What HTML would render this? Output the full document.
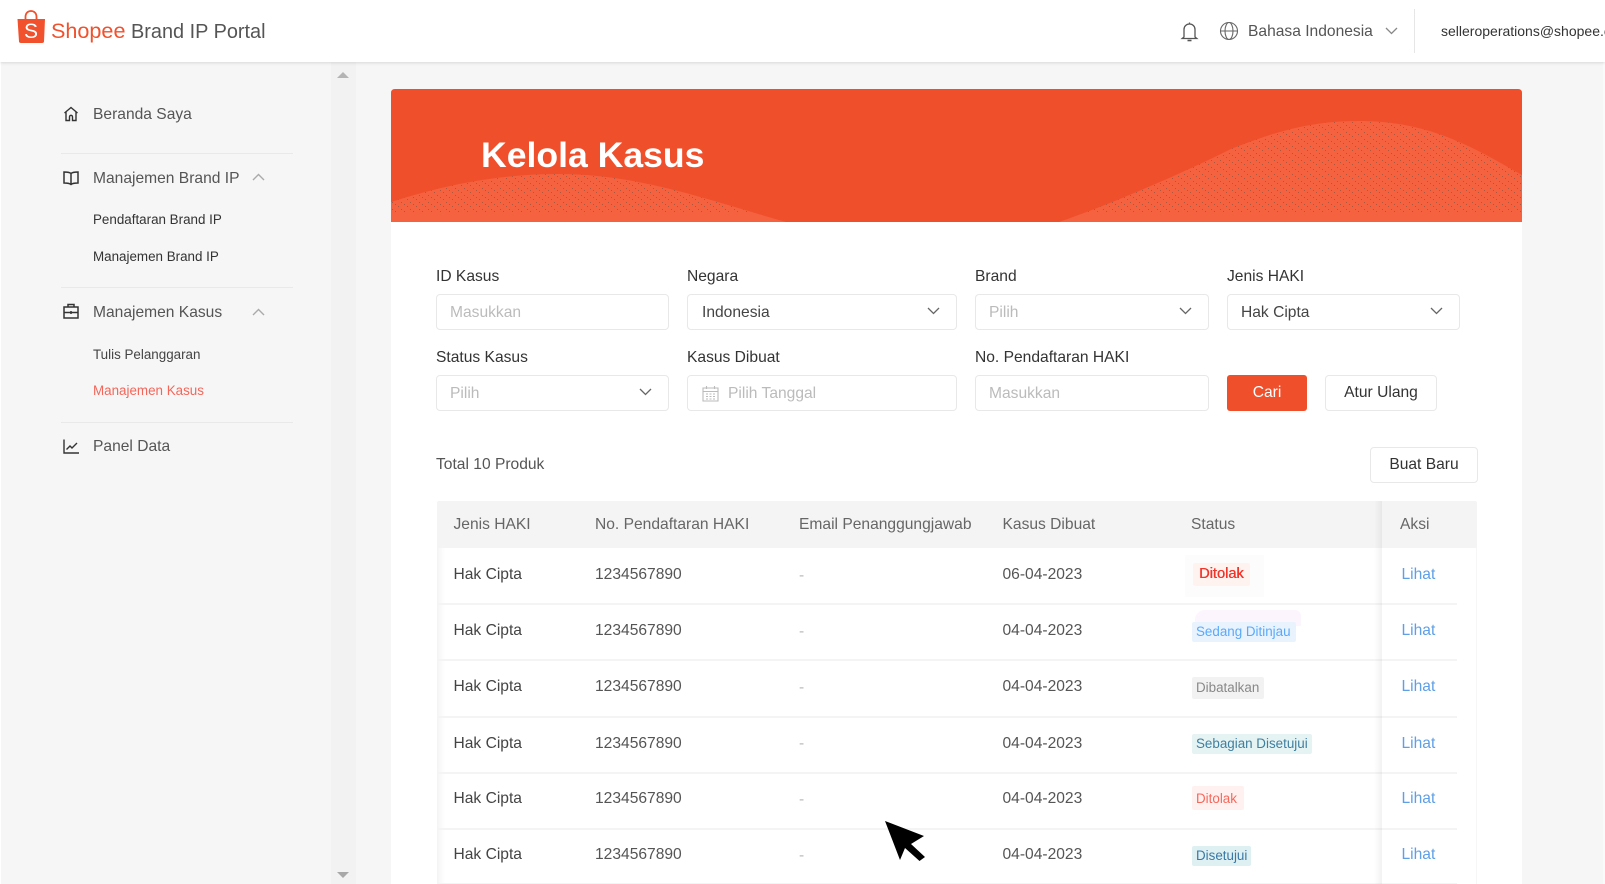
<!DOCTYPE html>
<html lang="id">
<head>
<meta charset="utf-8">
<title>Kelola Kasus</title>
<style>
html,body{margin:0;padding:0;width:1605px;height:884px;overflow:hidden;background:#f6f6f6}
body{position:relative;font-family:"Liberation Sans",Arial,sans-serif;font-size:15.6px;color:#444}
.a{position:absolute}
.t{position:absolute;white-space:nowrap;line-height:20px;height:20px}
.box{position:absolute;box-sizing:border-box;background:#fff;border:1px solid #e8e8e8;border-radius:4px;height:36px}
.lab{color:#333}
.ph{color:#bbb}
.sub{font-size:13.4px;color:#333}
.menu{color:#555}
.hd{color:#666}
.d{color:#555}
.l{color:#5f9fe6}
.hr{position:absolute;height:1px;background:#e9e9e9;left:61px;width:232px}
.row{position:absolute;left:437px;width:1020px;height:2px;background:#f4f4f4}
.tag{position:absolute;font-size:13.4px;line-height:20px;white-space:nowrap;box-sizing:border-box;border-radius:2px}
svg{position:absolute;overflow:visible}
</style>
</head>
<body>
<!-- page strips -->
<div class="a" style="left:0;top:62px;width:1px;height:822px;background:#fff"></div>
<div class="a" style="left:1603px;top:62px;width:2px;height:822px;background:#fafafa"></div>

<!-- scrollbar track -->
<div class="a" style="left:331px;top:62px;width:25px;height:822px;background:#f2f2f2"></div>
<svg style="left:337px;top:71px" width="12" height="8"><path d="M6 1L12 7H0Z" fill="#b4b4b4"/></svg>
<svg style="left:337px;top:871px" width="12" height="8"><path d="M0 1H12L6 7Z" fill="#a8a8a8"/></svg>

<!-- header -->
<div class="a" style="left:0;top:0;width:1605px;height:62px;background:#fff;box-shadow:0 1px 3px rgba(0,0,0,.12)"></div>
<svg style="left:17px;top:10px" width="29" height="34" viewBox="0 0 29 34">
  <path d="M8.500 9V7C8.500 3 11 1 14 1s5.500 2 5.500 6v2" fill="none" stroke="#f1512c" stroke-width="1.800"/>
  <path d="M0.500 9H28L27 31.500C27 32.500 26 33 25 33H4C3 33 2 32.500 2 31.500Z" fill="#f1512c"/>
  <text x="14" y="28" text-anchor="middle" font-family="Liberation Sans" font-size="21" fill="#fff">S</text>
</svg>
<div class="t" style="left:51px;top:19px;font-size:21.6px;line-height:24px;height:24px;color:#f1512c">Shopee</div>
<div class="t" style="left:131px;top:20px;font-size:19.9px;line-height:24px;height:24px;color:#555">Brand IP Portal</div>

<svg style="left:1181px;top:21px" width="17" height="21" viewBox="0 0 17 21" fill="none" stroke="#555" stroke-width="1.300">
  <path d="M8.500 1.500V3M3 16V8.500C3 5.300 5.300 3 8.500 3s5.500 2.300 5.500 5.500V16l1.800 1.500H1.200Z"/>
  <path d="M6.500 19.500h4" stroke-width="1.600"/>
</svg>
<svg style="left:1219px;top:21px" width="20" height="20" viewBox="0 0 20 20" fill="none" stroke="#666" stroke-width="1.100">
  <circle cx="10" cy="10" r="8.500"/>
  <ellipse cx="10" cy="10" rx="4" ry="8.500"/>
  <path d="M1.500 10h17"/>
</svg>
<div class="t" style="left:1248px;top:22px;color:#555">Bahasa Indonesia</div>
<svg style="left:1385px;top:27px" width="13" height="8" fill="none" stroke="#888" stroke-width="1.300"><path d="M1 1l5.500 5.500L12 1"/></svg>
<div class="a" style="left:1414px;top:9px;width:1px;height:44px;background:#e6e6e6"></div>
<div class="t" style="left:1441px;top:21px;font-size:14px;color:#333">selleroperations@shopee.com</div>

<!-- sidebar -->
<svg style="left:63px;top:106px" width="16" height="16" viewBox="0 0 16 16" fill="none" stroke="#333" stroke-width="1.400">
  <path d="M1.500 7L8 1.500 14.500 7M3 6v8.500h3.500V11c0-1 .7-1.700 1.500-1.700S9.500 10 9.500 11v3.500H13V6"/>
</svg>
<div class="t menu" style="left:93px;top:105px">Beranda Saya</div>
<div class="hr" style="top:153px"></div>

<svg style="left:63px;top:170px" width="16" height="16" viewBox="0 0 16 16" fill="none" stroke="#333" stroke-width="1.500">
  <path d="M8 3.500C7 2.500 5 2 1 2v11c4 0 6 .5 7 1.500 1-1 3-1.500 7-1.500V2c-4 0-6 .5-7 1.500ZM8 3.500v11"/>
</svg>
<div class="t menu" style="left:93px;top:168.500px">Manajemen Brand IP</div>
<svg style="left:252px;top:173px" width="13" height="8" fill="none" stroke="#aaa" stroke-width="1.400"><path d="M1 7l5.500-5.500L12 7"/></svg>
<div class="t sub" style="left:93px;top:210px">Pendaftaran Brand IP</div>
<div class="t sub" style="left:93px;top:246.500px">Manajemen Brand IP</div>
<div class="hr" style="top:287px"></div>

<svg style="left:63px;top:303px" width="16" height="16" viewBox="0 0 16 16" fill="none" stroke="#333" stroke-width="1.500">
  <path d="M1 4h14v11H1ZM5 4V1.500h6V4M1 9.500h14M8 8v3"/>
</svg>
<div class="t menu" style="left:93px;top:302.500px">Manajemen Kasus</div>
<svg style="left:252px;top:308px" width="13" height="8" fill="none" stroke="#aaa" stroke-width="1.400"><path d="M1 7l5.500-5.500L12 7"/></svg>
<div class="t sub" style="left:93px;top:344.500px;color:#444">Tulis Pelanggaran</div>
<div class="t sub" style="left:93px;top:380.500px;color:#f4665a">Manajemen Kasus</div>
<div class="hr" style="top:422px"></div>

<svg style="left:63px;top:438px" width="16" height="16" viewBox="0 0 16 16" fill="none" stroke="#333" stroke-width="1.400">
  <path d="M1 1.500V15h15"/>
  <path d="M3.500 11.500L7 8l2 2 5-5"/>
</svg>
<div class="t menu" style="left:93px;top:436.500px">Panel Data</div>

<!-- card -->
<div class="a" style="left:391px;top:222px;width:1131px;height:662px;background:#fff"></div>

<!-- banner -->
<svg style="left:391px;top:89px" width="1131" height="133" viewBox="0 0 1131 133">
  <defs>
    <clipPath id="bc"><path d="M0 133V4Q0 0 4 0H1127Q1131 0 1131 4V133Z"/></clipPath>
    <pattern id="dots" width="9" height="7" patternUnits="userSpaceOnUse">
      <rect x="1" y="1" width="1" height="1" fill="#7a4a3a" opacity=".55"/>
      <rect x="4" y="3" width="1" height="1" fill="#7a4a3a" opacity=".55"/>
      <rect x="7" y="5" width="1" height="1" fill="#7a4a3a" opacity=".55"/>
    </pattern>
    <clipPath id="dc"><rect x="0" y="0" width="1131" height="123"/></clipPath>
  </defs>
  <g clip-path="url(#bc)">
    <rect width="1131" height="133" fill="#f04f2b"/>
    <path d="M0 113C50 97 105 85 167 85C250 85 320 112 395 133H0Z" fill="#f4623f"/>
    <path d="M668 133C720 115 790 85 840 60C890 40 925 32 968 32C1040 32 1085 60 1131 86V133Z" fill="#f4623f"/>
    <g clip-path="url(#dc)">
      <path d="M0 113C50 97 105 85 167 85C250 85 320 112 395 133H0Z" fill="url(#dots)"/>
      <path d="M668 133C720 115 790 85 840 60C890 40 925 32 968 32C1040 32 1085 60 1131 86V133Z" fill="url(#dots)"/>
    </g>
  </g>
</svg>
<div class="t" style="left:481px;top:135px;font-size:35.6px;font-weight:bold;line-height:40px;height:40px;color:#fff">Kelola Kasus</div>

<!-- form row 1 -->
<div class="t lab" style="left:436px;top:267px">ID Kasus</div>
<div class="box" style="left:436px;top:294px;width:233px"></div>
<div class="t ph" style="left:450px;top:303px">Masukkan</div>

<div class="t lab" style="left:687px;top:267px">Negara</div>
<div class="box" style="left:687px;top:294px;width:270px"></div>
<div class="t" style="left:702px;top:303px">Indonesia</div>
<svg style="left:927px;top:307px" width="13" height="8" fill="none" stroke="#666" stroke-width="1.300"><path d="M1 1l5.500 5.500L12 1"/></svg>

<div class="t lab" style="left:975px;top:267px">Brand</div>
<div class="box" style="left:975px;top:294px;width:234px"></div>
<div class="t ph" style="left:989px;top:303px">Pilih</div>
<svg style="left:1179px;top:307px" width="13" height="8" fill="none" stroke="#666" stroke-width="1.300"><path d="M1 1l5.500 5.500L12 1"/></svg>

<div class="t lab" style="left:1227px;top:267px">Jenis HAKI</div>
<div class="box" style="left:1227px;top:294px;width:233px"></div>
<div class="t" style="left:1241px;top:303px">Hak Cipta</div>
<svg style="left:1430px;top:307px" width="13" height="8" fill="none" stroke="#666" stroke-width="1.300"><path d="M1 1l5.500 5.500L12 1"/></svg>

<!-- form row 2 -->
<div class="t lab" style="left:436px;top:347.500px">Status Kasus</div>
<div class="box" style="left:436px;top:375px;width:233px"></div>
<div class="t ph" style="left:450px;top:383.500px">Pilih</div>
<svg style="left:639px;top:388px" width="13" height="8" fill="none" stroke="#666" stroke-width="1.300"><path d="M1 1l5.500 5.500L12 1"/></svg>

<div class="t lab" style="left:687px;top:347.500px">Kasus Dibuat</div>
<div class="box" style="left:687px;top:375px;width:270px"></div>
<svg style="left:702px;top:385px" width="17" height="17" viewBox="0 0 17 17" fill="none" stroke="#bbb" stroke-width="1.100">
  <path d="M1 3h15v13H1ZM1 6.500h15M4.500 1v3M12.500 1v3"/>
  <path d="M4 9h2M7.500 9h2M11 9h2M4 11.500h2M7.500 11.500h2M11 11.500h2M4 14h2M7.500 14h2M11 14h2" stroke-width="1"/>
</svg>
<div class="t ph" style="left:728px;top:383.500px">Pilih Tanggal</div>

<div class="t lab" style="left:975px;top:347.500px">No. Pendaftaran HAKI</div>
<div class="box" style="left:975px;top:375px;width:234px"></div>
<div class="t ph" style="left:989px;top:383.500px">Masukkan</div>

<div class="a" style="left:1227px;top:375px;width:80px;height:36px;background:#f04f2b;border-radius:3px;color:#fff;text-align:center;line-height:36px">Cari</div>
<div class="box" style="left:1325px;top:375px;width:112px;text-align:center;line-height:34px;color:#333">Atur Ulang</div>

<!-- toolbar -->
<div class="t" style="left:436px;top:455px;color:#555">Total 10 Produk</div>
<div class="box" style="left:1370px;top:447px;width:108px;text-align:center;line-height:34px;color:#333">Buat Baru</div>

<!-- table -->
<div class="a" style="left:437px;top:501px;width:1040px;height:47px;background:#f4f4f4;border-radius:2px 2px 0 0"></div>
<div class="a" style="left:437px;top:548px;width:8px;height:336px;background:linear-gradient(to right,#f4f4f4,#fff)"></div>
<div class="a" style="left:1476px;top:548px;width:1px;height:336px;background:#f6f6f6"></div>

<div class="row" style="top:603px"></div>
<div class="row" style="top:659px"></div>
<div class="row" style="top:716px"></div>
<div class="row" style="top:772px"></div>
<div class="row" style="top:828px"></div>
<div class="row" style="top:883px"></div>

<div class="a" style="left:1374px;top:501px;width:8px;height:383px;background:linear-gradient(to right,rgba(0,0,0,0),rgba(0,0,0,.05))"></div>

<div class="t hd" style="left:453.500px;top:515px">Jenis HAKI</div>
<div class="t hd" style="left:595px;top:515px">No. Pendaftaran HAKI</div>
<div class="t hd" style="left:799px;top:515px">Email Penanggungjawab</div>
<div class="t hd" style="left:1002.500px;top:515px">Kasus Dibuat</div>
<div class="t hd" style="left:1191px;top:515px">Status</div>
<div class="t hd" style="left:1400px;top:515px">Aksi</div>

<!-- row 1 -->
<div class="t" style="left:453.500px;top:565px">Hak Cipta</div>
<div class="t d" style="left:595px;top:565px">1234567890</div>
<div class="t ph" style="left:799px;top:565.500px">-</div>
<div class="t d" style="left:1002.500px;top:565px">06-04-2023</div>
<div class="a" style="left:1185px;top:555px;width:79px;height:42px;background:#fdfcfc"></div>
<div class="tag" style="left:1193px;top:563px;width:57px;height:23px;background:#fff3f0;color:#f0352b;padding-left:6px;line-height:23px;font-size:14.6px;text-shadow:.4px 0 0 #f0352b">Ditolak</div>
<div class="t l" style="left:1401.500px;top:565px">Lihat</div>

<!-- row 2 -->
<div class="t" style="left:453.500px;top:621px">Hak Cipta</div>
<div class="t d" style="left:595px;top:621px">1234567890</div>
<div class="t ph" style="left:799px;top:622px">-</div>
<div class="t d" style="left:1002.500px;top:621px">04-04-2023</div>
<div class="a" style="left:1195px;top:610px;width:106px;height:16px;background:#fdf5fd;border-radius:10px 6px 0 0"></div>
<div class="tag" style="left:1192px;top:621.500px;width:104px;height:20px;background:#e8f3fe;color:#5aa9fa;padding-left:4px">Sedang Ditinjau</div>
<div class="t l" style="left:1401.500px;top:621px">Lihat</div>

<!-- row 3 -->
<div class="t" style="left:453.500px;top:677px">Hak Cipta</div>
<div class="t d" style="left:595px;top:677px">1234567890</div>
<div class="t ph" style="left:799px;top:678px">-</div>
<div class="t d" style="left:1002.500px;top:677px">04-04-2023</div>
<div class="tag" style="left:1192px;top:677px;width:72px;height:22px;background:#f2f2f2;color:#888;padding-left:4px;line-height:22px">Dibatalkan</div>
<div class="t l" style="left:1401.500px;top:677px">Lihat</div>

<!-- row 4 -->
<div class="t" style="left:453.500px;top:733.500px">Hak Cipta</div>
<div class="t d" style="left:595px;top:733.500px">1234567890</div>
<div class="t ph" style="left:799px;top:734px">-</div>
<div class="t d" style="left:1002.500px;top:733.500px">04-04-2023</div>
<div class="tag" style="left:1192px;top:734px;width:120px;height:20px;background:#e6f3f3;color:#3f7f9f;padding-left:4px">Sebagian Disetujui</div>
<div class="t l" style="left:1401.500px;top:733.500px">Lihat</div>

<!-- row 5 -->
<div class="t" style="left:453.500px;top:789px">Hak Cipta</div>
<div class="t d" style="left:595px;top:789px">1234567890</div>
<div class="t ph" style="left:799px;top:790px">-</div>
<div class="t d" style="left:1002.500px;top:789px">04-04-2023</div>
<div class="tag" style="left:1192px;top:786px;width:52px;height:24px;background:#fff1ef;color:#f7685c;padding-left:4px;line-height:26px">Ditolak</div>
<div class="t l" style="left:1401.500px;top:789px">Lihat</div>

<!-- row 6 -->
<div class="t" style="left:453.500px;top:845px">Hak Cipta</div>
<div class="t d" style="left:595px;top:845px">1234567890</div>
<div class="t ph" style="left:799px;top:846px">-</div>
<div class="t d" style="left:1002.500px;top:845px">04-04-2023</div>
<div class="tag" style="left:1192px;top:846px;width:59px;height:20px;background:#def0f2;color:#3a78a8;padding-left:4px;line-height:19px">Disetujui</div>
<div class="t l" style="left:1401.500px;top:845px">Lihat</div>

<!-- cursor -->
<svg style="left:0;top:0" width="1605" height="884">
  <path d="M885 821L924 836L911 844L925 857L919.500 861L905 848L900 860Z" fill="#000"/>
</svg>
</body>
</html>
